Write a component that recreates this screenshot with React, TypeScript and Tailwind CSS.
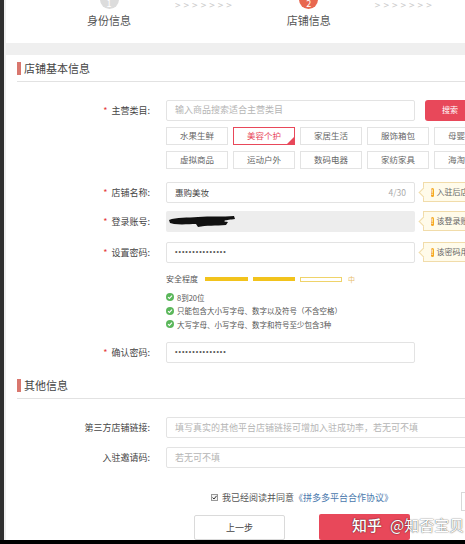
import React from 'react'

const FONT = { fontFamily: '"Noto Sans CJK SC", "Noto Sans", sans-serif' }

const TAGS_1 = ['水果生鲜', '美容个护', '家居生活', '服饰箱包', '母婴用品']
const TAGS_2 = ['虚拟商品', '运动户外', '数码电器', '家纺家具', '海淘进口']

function Label({ text, required = true }: { text: string; required?: boolean }) {
  return (
    <div className="w-[144px] shrink-0 text-right text-[9px] text-[#444] leading-none">
      {required && <span className="text-[#e4393c] mr-[4px]">*</span>}
      {text}
    </div>
  )
}

function Tip({ text }: { text: string }) {
  return (
    <div className="relative ml-[8px] h-[20px] w-[80px] shrink-0 border border-[#f1dcaa] bg-[#fffbea] flex items-center pl-[7px]">
      <div className="absolute -left-[4px] top-[6px] h-[7px] w-[7px] rotate-45 border-l border-b border-[#f1dcaa] bg-[#fffbea]" />
      <div className="relative h-[9px] w-[9px] rounded-full bg-[#f5a623] flex items-center justify-center text-white text-[7px] font-bold leading-none">
        !
      </div>
      <span className="relative ml-[3px] text-[8px] text-[#666] whitespace-nowrap">{text}</span>
    </div>
  )
}

function SectionTitle({ text }: { text: string }) {
  return (
    <div className="ml-[11px]">
      <div className="flex items-center h-[13px]">
        <div className="w-[4px] h-[13px] bg-[#d9776e]" />
        <span className="ml-[3px] text-[11px] text-[#444] leading-none">{text}</span>
      </div>
      <div className="mt-[6px] border-b border-[#e2e2e2]" />
    </div>
  )
}

function Dots() {
  return (
    <span className="text-[7px] tracking-[1px] text-[#555]" style={{ fontFamily: '"Liberation Sans", sans-serif' }}>
      •••••••••••••••
    </span>
  )
}

function Check({ text }: { text: string }) {
  return (
    <div className="flex items-center h-[13.5px]">
      <svg width="8" height="8" viewBox="0 0 8 8">
        <circle cx="4" cy="4" r="4" fill="#5bb75b" />
        <path d="M2 4.1 L3.4 5.4 L6 2.7" stroke="#fff" strokeWidth="1.1" fill="none" />
      </svg>
      <span className="ml-[3px] text-[7.5px] text-[#555] leading-none">{text}</span>
    </div>
  )
}

function Tag({ text, active }: { text: string; active?: boolean }) {
  return (
    <div
      className={`relative w-[62px] h-[18px] shrink-0 flex items-center justify-center border text-[8.5px] ${
        active ? 'border-[#e8485a] text-[#e8485a]' : 'border-[#e3e3e3] text-[#666]'
      }`}
    >
      {text}
      {active && (
        <div className="absolute right-0 bottom-0 w-0 h-0 border-l-[7px] border-l-transparent border-b-[7px] border-b-[#e8485a]" />
      )}
    </div>
  )
}

export default function App() {
  return (
    <div className="relative w-[465px] h-[544px] overflow-hidden flex flex-col bg-[#efefef]" style={FONT}>
      <div className="flex h-[540px]">
        <div className="w-[4px] shrink-0 bg-[#2f2f2f]" />
        <div className="flex-1 pl-[2px] flex flex-col">
          {/* steps */}
          <div className="h-[43px] bg-white flex items-start pl-[73px]">
            <div className="w-[60px] flex flex-col items-center">
              <div className="-mt-[10px] h-[19px] w-[19px] rounded-full bg-[#dcdcdc] flex items-end justify-center pb-[1px] text-[9px] text-white leading-none">
                1
              </div>
              <div className="mt-[4px] text-[11px] text-[#555] leading-[14px]">身份信息</div>
            </div>
            <div className="ml-[36px] mt-[-1px] text-[10px] tracking-[3px] text-[#cacaca] leading-[12px]">&gt;&gt;&gt;&gt;&gt;&gt;&gt;</div>
            <div className="ml-[44px] w-[60px] flex flex-col items-center">
              <div className="-mt-[10px] h-[19px] w-[19px] rounded-full bg-[#e8674f] flex items-end justify-center pb-[1px] text-[9px] text-white leading-none">
                2
              </div>
              <div className="mt-[4px] text-[11px] text-[#555] leading-[14px]">店铺信息</div>
            </div>
            <div className="ml-[36px] mt-[-1px] text-[10px] tracking-[3px] text-[#cacaca] leading-[12px]">&gt;&gt;&gt;&gt;&gt;&gt;&gt;</div>
          </div>
          <div className="h-[12px]" />

          {/* panel */}
          <div className="flex-1 bg-white pt-[7px]">
            <SectionTitle text="店铺基本信息" />

            <div className="mt-[18px] flex items-center">
              <Label text="主营类目:" />
              <div className="ml-[16px] w-[249px] h-[21px] shrink-0 border border-[#e3e3e3] rounded-[2px] flex items-center px-[8px] text-[9px] text-[#b5b5b5]">
                输入商品搜索适合主营类目
              </div>
              <div className="ml-[10px] w-[50px] h-[21px] shrink-0 rounded-[3px] bg-[#e8485a] flex items-center justify-center text-[8px] text-white">
                搜索
              </div>
            </div>

            <div className="mt-[6px] ml-[160px] flex gap-[5px]">
              {TAGS_1.map(t => (
                <Tag key={t} text={t} active={t === '美容个护'} />
              ))}
            </div>
            <div className="mt-[6px] ml-[160px] flex gap-[5px]">
              {TAGS_2.map(t => (
                <Tag key={t} text={t} />
              ))}
            </div>

            <div className="mt-[13px] flex items-center">
              <Label text="店铺名称:" />
              <div className="ml-[16px] w-[249px] h-[21px] shrink-0 border border-[#e3e3e3] rounded-[2px] flex items-center justify-between px-[8px] text-[8.5px] text-[#444]">
                <span>惠购美妆</span>
                <span className="text-[#aaa]">4/30</span>
              </div>
              <Tip text="入驻后店铺名称不可修改" />
            </div>

            <div className="mt-[8px] flex items-center">
              <Label text="登录账号:" />
              <div className="ml-[16px] w-[249px] h-[21px] shrink-0 rounded-[2px] bg-[#ededed] flex items-center px-[2px]">
                <svg width="70" height="14" viewBox="0 0 70 14">
                  <path
                    d="M1 6 C8 3 20 4 30 3 C42 2 55 3 66 2 L67 5 C58 6 52 7 60 8 L58 11 C48 12 38 11 30 13 L28 10 C22 10 14 11 6 10 L2 9 Z"
                    fill="#111"
                  />
                </svg>
              </div>
              <Tip text="该登录账号用于登录商家后台" />
            </div>

            <div className="mt-[10px] flex items-center">
              <Label text="设置密码:" />
              <div className="ml-[16px] w-[249px] h-[21px] shrink-0 border border-[#e3e3e3] rounded-[2px] flex items-center px-[8px]">
                <Dots />
              </div>
              <Tip text="该密码用于登录商家后台" />
            </div>

            <div className="mt-[12px] ml-[160px] flex items-center h-[9px]">
              <span className="text-[8px] text-[#555] leading-none">安全程度</span>
              <div className="ml-[7px] w-[43px] h-[4px] bg-[#f2c31c]" />
              <div className="ml-[5px] w-[42px] h-[4px] bg-[#f2c31c]" />
              <div className="ml-[5px] w-[42px] h-[5px] border border-[#efd36a]" />
              <span className="ml-[6px] text-[7px] text-[#e9be6a] leading-none">中</span>
            </div>

            <div className="mt-[7px] ml-[160px]">
              <Check text="8到20位" />
              <Check text="只能包含大小写字母、数字以及符号（不含空格）" />
              <Check text="大写字母、小写字母、数字和符号至少包含3种" />
            </div>

            <div className="mt-[11px] flex items-center">
              <Label text="确认密码:" />
              <div className="ml-[16px] w-[249px] h-[21px] shrink-0 border border-[#e3e3e3] rounded-[2px] flex items-center px-[8px]">
                <Dots />
              </div>
            </div>

            <div className="mt-[16px]">
              <SectionTitle text="其他信息" />
            </div>

            <div className="mt-[18px] flex items-center">
              <Label text="第三方店铺链接:" required={false} />
              <div className="ml-[16px] w-[320px] h-[21px] shrink-0 border border-[#e3e3e3] rounded-[2px] flex items-center px-[8px] text-[9px] text-[#b5b5b5] whitespace-nowrap">
                填写真实的其他平台店铺链接可增加入驻成功率，若无可不填
              </div>
            </div>

            <div className="mt-[9px] flex items-center">
              <Label text="入驻邀请码:" required={false} />
              <div className="ml-[16px] w-[320px] h-[21px] shrink-0 border border-[#e3e3e3] rounded-[2px] flex items-center px-[8px] text-[9px] text-[#b5b5b5]">
                若无可不填
              </div>
            </div>

            <div className="mt-[23px] ml-[205px] flex items-center h-[12px]">
              <svg width="7" height="7" viewBox="0 0 7 7">
                <rect x="0.5" y="0.5" width="6" height="6" fill="#f4f4f4" stroke="#999" />
                <path d="M1.5 3.5 L3 5 L5.6 1.8" stroke="#333" strokeWidth="1" fill="none" />
              </svg>
              <span className="ml-[4px] text-[9px] text-[#555] leading-none">我已经阅读并同意</span>
              <span className="text-[9px] text-[#4a78ad] leading-none">《拼多多平台合作协议》</span>
            </div>

            <div className="mt-[12px] ml-[188px] flex">
              <div className="w-[91px] h-[25px] border border-[#dadada] rounded-[2px] flex items-center justify-center text-[9px] text-[#444]">
                上一步
              </div>
              <div className="ml-[34px] w-[91px] h-[26px] -mt-[1px] rounded-[2px] bg-[#e8485a]" />
            </div>
          </div>
        </div>
      </div>
      <div className="h-[4px] bg-black" />

      <div className="absolute right-[-10px] top-[492px] w-[14px] h-[19px] border border-[#d8d8d8] bg-white" />

      <div className="absolute left-[352px] top-[514px] flex items-center text-white whitespace-nowrap [text-shadow:0_0_1px_rgba(0,0,0,0.7),0_0_2px_rgba(0,0,0,0.35)]">
        <span className="text-[15px] font-medium">知乎</span>
        <span className="ml-[8px] text-[15px]">@知否宝贝</span>
      </div>
    </div>
  )
}
